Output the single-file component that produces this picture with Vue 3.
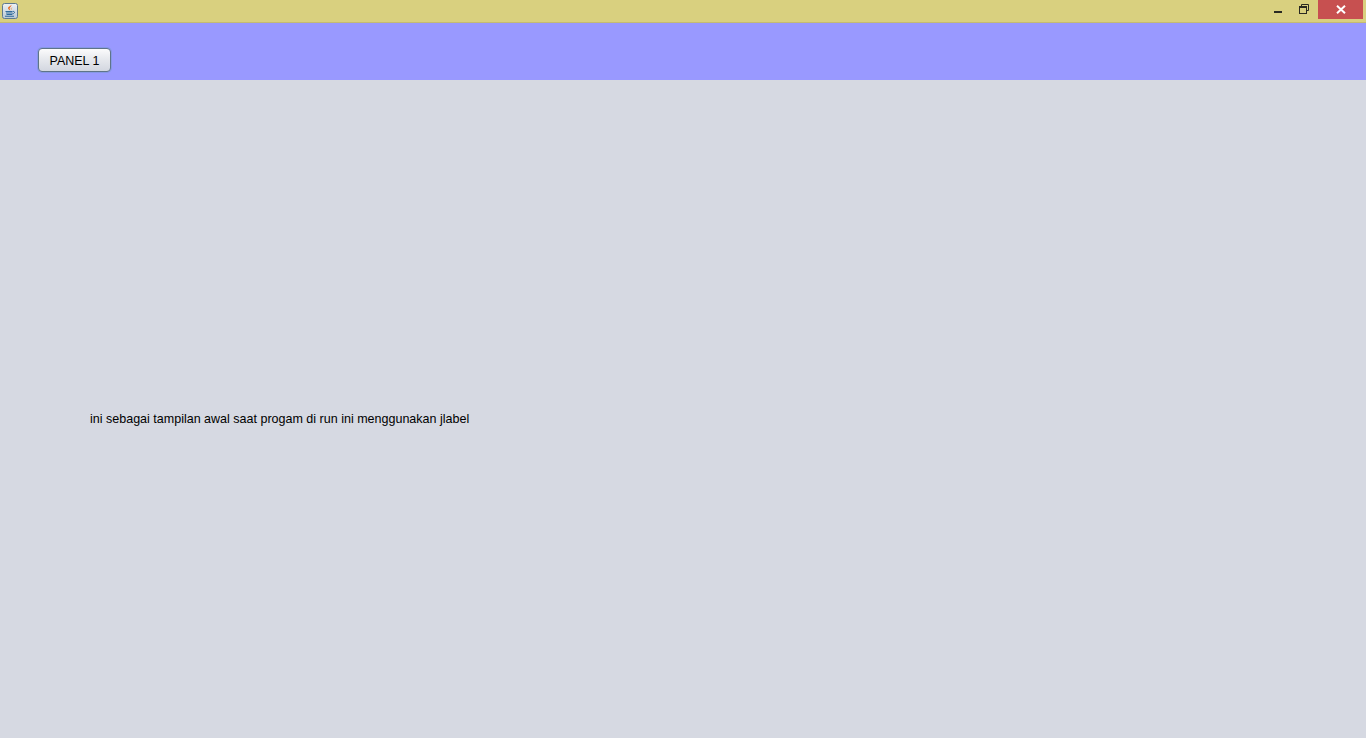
<script setup>
const label = 'ini sebagai tampilan awal saat progam di run ini menggunakan jlabel'
</script>

<template>
  <div class="window">
    <header class="titlebar">
      <div class="app-icon">
        <svg width="16" height="16" viewBox="0 0 16 16">
          <defs>
            <linearGradient id="ig" x1="0" y1="0" x2="0" y2="1">
              <stop offset="0" stop-color="#eef1f3" />
              <stop offset="1" stop-color="#b9c8d6" />
            </linearGradient>
          </defs>
          <rect x="0.5" y="0.5" width="15" height="15" rx="2" fill="url(#ig)" stroke="#5f7a90" />
          <path d="M9.2 1.8c1 1.6-2 2.6-1.6 4.3.1.6.5 1 .9 1.4-1.7-.6-2.8-1.6-2.3-2.9.5-1.2 2.8-1.5 3-2.8z" fill="#e8651a" />
          <path d="M10.8 4.2c-1 .6-1.7 1.2-1.4 2.1.1.4.3.7.4 1-.9-.5-1.3-1.3-1-2 .4-.6 1.2-.8 2-1.1z" fill="#ee8a3a" />
          <path d="M3.5 8.5h7M4 10h6.5M4.5 11.5h5.5M3 13.2h9" stroke="#2f6a9c" stroke-width="1.1" fill="none" />
          <path d="M10.8 8.4c2.2-.4 2.6 1.9-.6 2.7" stroke="#2f6a9c" stroke-width="1" fill="none" />
        </svg>
      </div>
      <div class="controls">
        <div class="ctl">
          <svg width="10" height="10" viewBox="0 0 10 10"><rect x="1" y="7" width="8" height="2" fill="#2a2a22" /></svg>
        </div>
        <div class="ctl">
          <svg width="10" height="10" viewBox="0 0 10 10">
            <path d="M2.5 2.5V.5h7v6H7.5" fill="none" stroke="#2a2a22" />
            <rect x="0.5" y="2.5" width="7" height="7" fill="none" stroke="#2a2a22" />
            <rect x="1" y="3" width="6" height="1" fill="#2a2a22" />
          </svg>
        </div>
        <div class="ctl close">
          <svg width="10" height="9" viewBox="0 0 10 9"><path d="M1 .8l8 7.4M9 .8L1 8.2" stroke="#fff" stroke-width="2" fill="none" /></svg>
        </div>
      </div>
    </header>
    <nav class="toolbar">
      <button class="panel-btn" type="button">PANEL 1</button>
    </nav>
    <main class="content">
      <p class="label">{{ label }}</p>
    </main>
  </div>
</template>

<style>
html, body { margin: 0; padding: 0; overflow: hidden; }
</style>

<style scoped>
.window {
  width: 1366px;
  height: 738px;
  display: flex;
  flex-direction: column;
  font-family: "Liberation Sans", Arial, sans-serif;
  background: #d6d9e2;
}
.titlebar {
  height: 23px;
  box-sizing: border-box;
  background: #d9d07f;
  border-bottom: 1px solid #c4bb73;
  display: flex;
  justify-content: space-between;
  align-items: flex-start;
  padding: 3px 3px 0 2px;
}
.app-icon { width: 16px; height: 16px; line-height: 0; }
.controls { display: flex; margin-top: -3px; }
.ctl {
  width: 26px;
  height: 18px;
  padding-bottom: 1px;
  display: flex;
  align-items: center;
  justify-content: center;
}
.close {
  width: 45px;
  margin-left: 1px;
  background: #c75050;
}
.toolbar {
  height: 57px;
  box-sizing: border-box;
  background: #9999ff;
  padding: 25px 0 0 38px;
}
.panel-btn {
  display: block;
  width: 73px;
  height: 24px;
  box-sizing: border-box;
  padding: 2px 0 0;
  border: 1px solid #5f7488;
  border-radius: 4px;
  background: linear-gradient(#fbfbfc 0%, #e9ebef 40%, #d3d7e0 100%);
  box-shadow: 0 0 0 1px rgba(110, 150, 200, 0.45);
  font: 12.5px "Liberation Sans", Arial, sans-serif;
  color: #000;
}
.content {
  flex: 1;
  padding: 332px 0 0 90px;
}
.label {
  margin: 0;
  font-size: 12.53px;
  line-height: 15px;
  color: #000;
}
</style>
